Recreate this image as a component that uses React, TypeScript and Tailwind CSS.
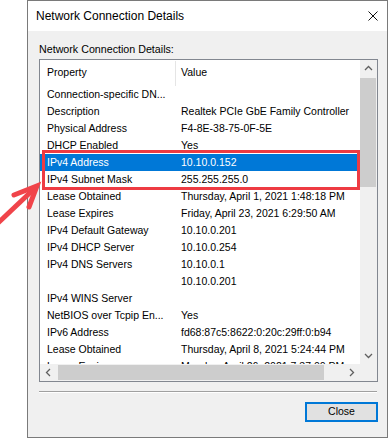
import type { ReactNode } from "react";

type Row = {
  name: string;
  value: string;
  selected?: boolean;
};

const rows: Row[] = [
  { name: "Connection-specific DN...", value: "" },
  { name: "Description", value: "Realtek PCIe GbE Family Controller" },
  { name: "Physical Address", value: "F4-8E-38-75-0F-5E" },
  { name: "DHCP Enabled", value: "Yes" },
  { name: "IPv4 Address", value: "10.10.0.152", selected: true },
  { name: "IPv4 Subnet Mask", value: "255.255.255.0" },
  { name: "Lease Obtained", value: "Thursday, April 1, 2021 1:48:18 PM" },
  { name: "Lease Expires", value: "Friday, April 23, 2021 6:29:50 AM" },
  { name: "IPv4 Default Gateway", value: "10.10.0.201" },
  { name: "IPv4 DHCP Server", value: "10.10.0.254" },
  { name: "IPv4 DNS Servers", value: "10.10.0.1" },
  { name: "", value: "10.10.0.201" },
  { name: "IPv4 WINS Server", value: "" },
  { name: "NetBIOS over Tcpip En...", value: "Yes" },
  { name: "IPv6 Address", value: "fd68:87c5:8622:0:20c:29ff:0:b94" },
  { name: "Lease Obtained", value: "Thursday, April 8, 2021 5:24:44 PM" },
  { name: "Lease Expires", value: "Monday, April 26, 2021 7:37:00 PM" },
];

function Chevron({ points }: { points: string }) {
  return (
    <svg width="17" height="17" viewBox="0 0 17 17" fill="none">
      <polyline points={points} stroke="#606060" strokeWidth="1.3" />
    </svg>
  );
}

function ScrollButton({ children }: { children: ReactNode }) {
  return <div className="flex h-[17px] w-[17px] shrink-0 items-center justify-center">{children}</div>;
}

export default function App() {
  return (
    <div className="relative h-[438px] w-[389px] overflow-hidden bg-white pl-[27px] font-['Liberation_Sans',Arial,sans-serif] text-black">
      <div className="flex h-[438px] w-[361px] flex-col border border-[#7a7a7a]">
        {/* title bar */}
        <div className="flex h-[30px] shrink-0 items-center justify-between bg-white pl-[8px] pr-[9px]">
          <span className="text-[12px]">Network Connection Details</span>
          <svg width="10" height="10" viewBox="0 0 10 10">
            <path d="M0.5 0.5 L9.5 9.5 M9.5 0.5 L0.5 9.5" stroke="#111" strokeWidth="1" />
          </svg>
        </div>

        <div className="flex flex-1 flex-col bg-[#f0f0f0] pl-[11px] pr-[9px] pt-[10px]">
          <div className="mb-[2px] h-[16px] text-[10.7px] leading-[16px]">Network Connection Details:</div>

          {/* list view */}
          <div className="grid h-[323px] w-[339px] grid-cols-[320px_17px] grid-rows-[304px_17px] border border-[#828790] bg-white">
            <div className="overflow-hidden bg-white text-[10.5px]">
              <div className="flex h-[26px] items-center">
                <div className="w-[135px] pl-[7px]">Property</div>
                <div className="h-[25px] w-px bg-[#e5e5e5]" />
                <div className="pl-[5px]">Value</div>
              </div>
              {rows.map((row, i) => (
                <div
                  key={i}
                  className={
                    row.selected
                      ? "flex h-[17px] items-center whitespace-nowrap bg-[#0078d7] text-white"
                      : "flex h-[17px] items-center whitespace-nowrap"
                  }
                >
                  <div className="w-[136px] shrink-0 pl-[7px]">{row.name}</div>
                  <div className="pl-[5px]">{row.value}</div>
                </div>
              ))}
            </div>

            <div className="flex flex-col bg-[#f0f0f0]">
              <ScrollButton>
                <Chevron points="5,10 8.5,6.5 12,10" />
              </ScrollButton>
              <div className="mt-px h-[109px] w-[16px] bg-[#cdcdcd]" />
              <div className="flex-1" />
              <ScrollButton>
                <Chevron points="5,7 8.5,10.5 12,7" />
              </ScrollButton>
            </div>

            <div className="flex items-center bg-[#f0f0f0]">
              <ScrollButton>
                <Chevron points="10,5 6.5,8.5 10,12" />
              </ScrollButton>
              <div className="ml-px h-[15px] w-[266px] bg-[#cdcdcd]" />
              <div className="flex-1" />
              <ScrollButton>
                <Chevron points="7,5 10.5,8.5 7,12" />
              </ScrollButton>
            </div>

            <div className="bg-[#f0f0f0]" />
          </div>

          <div className="mt-[9px] h-[2px] w-[338px] border-t border-b border-t-[#a0a0a0] border-b-white" />

          <div className="mt-[9px] flex justify-end">
            <button
              type="button"
              className="flex h-[20px] w-[73px] items-center justify-center border-2 border-[#0078d7] bg-[#e1e1e1] text-[10.5px] text-black"
            >
              Close
            </button>
          </div>
        </div>
      </div>

      {/* annotation: red box over selection */}
      <div className="pointer-events-none absolute left-[42px] top-[150px] h-[40px] w-[318px] border-[3px] border-[#ee3b42]" />

      {/* annotation: red arrow */}
      <svg
        className="pointer-events-none absolute left-0 top-[176px]"
        width="44"
        height="50"
        viewBox="0 0 44 50"
        fill="none"
      >
        <line x1="35" y1="12" x2="-3" y2="48" stroke="#f0444a" strokeWidth="5" />
        <polyline
          points="14,19 37,10 29,31"
          stroke="#f0444a"
          strokeWidth="5"
          strokeLinejoin="miter"
          strokeLinecap="round"
        />
      </svg>
    </div>
  );
}
